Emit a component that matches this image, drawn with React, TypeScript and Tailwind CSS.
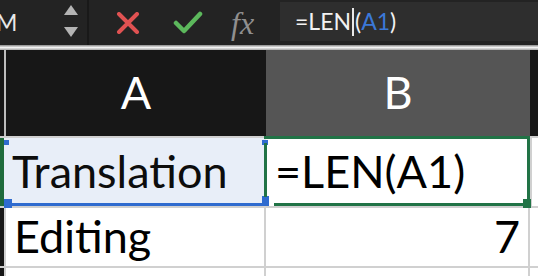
import React from 'react';

const cellFont = { fontFamily: 'Lato, "Noto Sans", sans-serif' };

const Toolbar = () => (
  <div className="flex h-[45px] bg-[#232323]">
    {/* Name box (cut off) */}
    <div className="relative flex w-[87px] items-center">
      <span className="ml-[-4px] text-[23px] leading-none text-[#e8e8e8]" style={cellFont}>
        M
      </span>
      <div className="absolute left-[64px] top-[5px] flex flex-col gap-[12px]">
        <div className="h-0 w-0 border-x-[7px] border-b-[10px] border-x-transparent border-b-[#b4b4b4]" />
        <div className="h-0 w-0 border-x-[7px] border-t-[10px] border-x-transparent border-t-[#b4b4b4]" />
      </div>
    </div>
    <div className="w-[2px] bg-[#191919]" />

    {/* Cancel / enter / fx */}
    <div className="flex w-[191px] items-center">
      <svg width="24" height="22" viewBox="0 0 24 22" className="ml-[27px]">
        <path d="M3 2 L21 20 M21 2 L3 20" stroke="#e05252" strokeWidth="4" strokeLinecap="round" />
      </svg>
      <svg width="30" height="24" viewBox="0 0 30 24" className="ml-[33px]">
        <path d="M3 12 L11 20 L27 3" stroke="#5cb85c" strokeWidth="4.5" strokeLinecap="round" strokeLinejoin="round" fill="none" />
      </svg>
      <span
        className="ml-[28px] text-[32px] italic leading-none text-[#8f8f8f]"
        style={{ fontFamily: '"Liberation Serif", serif' }}
      >
        fx
      </span>
    </div>

    {/* Formula bar */}
    <div className="flex flex-1 flex-col">
      <div className="mt-[2px] flex h-[39px] items-center bg-[#2e2e2e] pl-[15px] text-[23px] text-[#f2f2f2]" style={cellFont}>
        <span>=LEN</span>
        <span className="mx-[1px] h-[28px] w-[2px] bg-[#e8e8e8]" />
        <span>(</span>
        <span className="text-[#3b78d8]">A1</span>
        <span>)</span>
      </div>
    </div>
  </div>
);

export default function App() {
  return (
    <div className="h-[276px] w-[538px] overflow-hidden bg-white">
      <Toolbar />
      {/* divider between toolbar and grid */}
      <div className="h-[5px] bg-gradient-to-b from-[#8a8a8a] via-[#f2f2f2] to-[#a8a8a8]" />

      {/* Column headers */}
      <div className="flex h-[86px]">
        <div className="w-[4px] bg-[#171717]" />
        <div className="w-[2px] bg-[#bdbdbd]" />
        <div className="flex w-[260px] items-center justify-center bg-[#171717] text-[45px] text-white" style={cellFont}>
          A
        </div>
        <div className="flex w-[264px] items-center justify-center bg-[#555555] text-[45px] text-white" style={cellFont}>
          B
        </div>
        <div className="flex-1 bg-[#171717]" />
      </div>

      {/* Row 1 */}
      <div className="relative flex h-[70px] border-t-[2px] border-[#d0d0d0]" style={cellFont}>
        <div className="w-[4px] bg-[#1f6b3d]" />
        <div className="flex w-[262px] items-center bg-[#e8eef8] pl-[8px] text-[45px] text-[#0d0d0d]">
          Translation
        </div>
        <div className="flex w-[264px] items-center pl-[9px] text-[45px] text-black">=LEN(A1)</div>
        <div className="flex-1 border-l-[2px] border-[#d0d0d0]" />

        {/* A1 reference highlight */}
        <div className="absolute left-[6px] top-[65px] h-[3px] w-[258px] bg-[#2f6bcf]" />
        <div className="absolute left-[4px] top-[2px] h-[5px] w-[5px] bg-[#2f6bcf]" />
        <div className="absolute left-[4px] top-[61px] h-[9px] w-[8px] bg-[#2f6bcf]" />
        <div className="absolute left-[262px] top-[2px] h-[5px] w-[6px] bg-[#2f6bcf]" />
        <div className="absolute left-[262px] top-[58px] h-[10px] w-[7px] bg-[#2f6bcf]" />

        {/* B1 active cell */}
        <div className="absolute left-[264px] top-[-2px] h-[3px] w-[266px] bg-[#217346]" />
        <div className="absolute left-[264px] top-[5px] h-[54px] w-[3px] bg-[#217346]" />
        <div className="absolute left-[527px] top-[-2px] h-[68px] w-[3px] bg-[#217346]" />
        <div className="absolute left-[274px] top-[65px] h-[3px] w-[250px] bg-[#217346]" />
        <div className="absolute left-[523px] top-[61px] h-[9px] w-[8px] bg-[#217346]" />
      </div>

      {/* Row 2 */}
      <div className="flex h-[60px] border-t-[2px] border-[#d0d0d0]" style={cellFont}>
        <div className="w-[4px] bg-[#171717]" />
        <div className="w-[2px] bg-[#d0d0d0]" />
        <div className="flex w-[258px] items-center pl-[8px] text-[45px] text-black">Editing</div>
        <div className="w-[2px] bg-[#d0d0d0]" />
        <div className="flex w-[262px] items-center justify-end pr-[8px] text-[45px] text-black">7</div>
        <div className="flex-1 border-l-[2px] border-[#d0d0d0]" />
      </div>

      {/* Row 3 */}
      <div className="flex h-[20px] border-t-[2px] border-[#d0d0d0]">
        <div className="w-[4px] bg-[#171717]" />
        <div className="w-[2px] bg-[#d0d0d0]" />
        <div className="w-[258px]" />
        <div className="w-[2px] bg-[#d0d0d0]" />
        <div className="w-[262px]" />
        <div className="flex-1 border-l-[2px] border-[#d0d0d0]" />
      </div>
    </div>
  );
}
